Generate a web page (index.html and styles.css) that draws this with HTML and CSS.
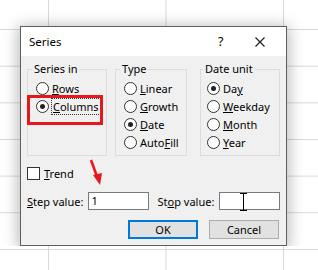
FILE: index.html
```html
<!DOCTYPE html>
<html>
<head>
<meta charset="utf-8">
<link rel="stylesheet" href="styles.css">
</head>
<body>
<div class="dialog">
  <div class="titlebar">
    <span class="title">Series</span>
    <span class="help">?</span>
    <span class="close"><svg width="10" height="10" viewBox="0 0 10 10"><path d="M0.5 0.5 L9.5 9.5 M9.5 0.5 L0.5 9.5" stroke="#1a1a1a" stroke-width="1.1" fill="none"/></svg></span>
  </div>
  <div class="content">
    <div class="groups">
      <fieldset class="group g-series">
        <legend>Series in</legend>
        <div class="opt"><span class="radio"></span><span class="lbl"><u>R</u>ows</span></div>
        <div class="opt"><span class="radio on"></span><span class="lbl focus"><u>C</u>olumns</span></div>
      </fieldset>
      <fieldset class="group g-type">
        <legend>Type</legend>
        <div class="opt"><span class="radio"></span><span class="lbl"><u>L</u>inear</span></div>
        <div class="opt"><span class="radio"></span><span class="lbl"><u>G</u>rowth</span></div>
        <div class="opt"><span class="radio on"></span><span class="lbl"><u>D</u>ate</span></div>
        <div class="opt"><span class="radio"></span><span class="lbl">Auto<u>F</u>ill</span></div>
      </fieldset>
      <fieldset class="group g-date">
        <legend>Date unit</legend>
        <div class="opt"><span class="radio on"></span><span class="lbl">Da<u>y</u></span></div>
        <div class="opt"><span class="radio"></span><span class="lbl"><u>W</u>eekday</span></div>
        <div class="opt"><span class="radio"></span><span class="lbl"><u>M</u>onth</span></div>
        <div class="opt"><span class="radio"></span><span class="lbl"><u>Y</u>ear</span></div>
      </fieldset>
    </div>
    <div class="trend"><span class="check"></span><span class="lbl"><u>T</u>rend</span></div>
    <div class="values">
      <span class="vlabel"><u>S</u>tep value:</span>
      <span class="input step">1</span>
      <span class="vlabel stop">St<u>o</u>p value:</span>
      <span class="input stopin"></span>
    </div>
    <div class="buttons">
      <span class="btn ok">OK</span>
      <span class="btn cancel">Cancel</span>
    </div>
  </div>
  <div class="highlight"></div>
  <svg class="arrow" width="16" height="28" viewBox="0 0 16 28"><path d="M2 1 L8.5 19" stroke="#e8171d" stroke-width="2.6" fill="none"/><path d="M4 16 L13 14 L11 26 Z" fill="#e8171d"/></svg>
  <svg class="ibeam" width="9" height="18" viewBox="0 0 9 18"><path d="M1 0.5 H8 M1 17.5 H8 M4.5 0.5 V17.5" stroke="#000" stroke-width="1" fill="none"/></svg>
</div>
</body>
</html>
```
FILE: styles.css
```css
html, body {
  margin: 0;
  padding: 0;
}
html {
  height: 270px;
  background-color: #ffffff;
  background-image:
    linear-gradient(to right, #d9d9d9 1px, transparent 1px),
    linear-gradient(to bottom, #d9d9d9 1px, transparent 1px);
  background-size: 117.5px 100%, 100% 36.67px;
  background-position: 48px 0, 0 29px;
}
body {
  font-family: "Noto Sans", "Open Sans", sans-serif;
  font-size: 11px;
  color: #000;
  padding-top: 26px;
  padding-left: 20px;
}
.dialog {
  position: relative;
  width: 265px;
  height: 218px;
  border: 1px solid #5f5f5f;
  background: #f0f0f0;
  box-shadow: 0 2px 14px 2px rgba(0, 0, 0, 0.28);
  box-sizing: content-box;
}
.titlebar {
  height: 29px;
  background: #ffffff;
  display: flex;
  align-items: center;
  padding-left: 8px;
  font-size: 11.5px;
}
.title {
  width: 189px;
}
.help {
  width: 24px;
  font-size: 12.5px;
}
.close {
  display: flex;
  margin-left: 13px;
}
.content {
  padding: 5px 6px 0 6px;
}
.groups {
  display: flex;
  height: 95px;
}
.group {
  margin: 0;
  border: 1px solid #dcdcdc;
  padding: 2px 0 0 8px;
  box-sizing: border-box;
  min-width: 0;
}
.group legend {
  padding: 0 2px;
  margin-left: -4px;
  line-height: 16px;
}
.g-series { width: 80px; }
.g-type { width: 72px; margin-left: 8px; }
.g-date { width: 80px; margin-left: 13px; padding-left: 6px; }
.opt {
  display: flex;
  align-items: center;
  height: 18px;
}
.radio {
  width: 11px;
  height: 11px;
  border: 1px solid #333;
  border-radius: 50%;
  background: #fff;
  box-sizing: content-box;
  display: flex;
  align-items: center;
  justify-content: center;
  flex: none;
}
.radio.on::after {
  content: "";
  width: 5px;
  height: 5px;
  border-radius: 50%;
  background: #222;
}
.lbl {
  margin-left: 3px;
  line-height: 15px;
}
.lbl.focus {
  outline: 1px dotted #333;
  outline-offset: 0;
  padding: 0 1px;
}
.trend {
  display: flex;
  align-items: center;
  height: 14px;
  margin-top: 10px;
}
.check {
  width: 11px;
  height: 11px;
  border: 1px solid #333;
  background: #fff;
  flex: none;
}
.trend .lbl { margin-left: 4px; }
.values {
  display: flex;
  align-items: center;
  margin-top: 12px;
  height: 18px;
}
.vlabel {
  width: 62px;
}
.vlabel.stop {
  margin-left: 9px;
  width: 63px;
}
.input {
  width: 56px;
  height: 16px;
  border: 1px solid #7a7a7a;
  background: #fff;
  padding-left: 3px;
  line-height: 16px;
  flex: none;
}
.input.stopin { width: 56px; }
.buttons {
  display: flex;
  justify-content: flex-end;
  margin-top: 10px;
  padding-right: 1px;
}
.btn {
  display: flex;
  align-items: center;
  justify-content: center;
  width: 68px;
  height: 17px;
  border: 1px solid #adadad;
  background: #e1e1e1;
}
.btn.ok {
  border: 2px solid #0078d7;
  width: 66px;
  height: 15px;
}
.btn.cancel {
  margin-left: 11px;
}
.highlight {
  position: absolute;
  left: 6px;
  top: 68px;
  width: 70px;
  height: 24px;
  border: 3px solid #e8171d;
}
.arrow {
  position: absolute;
  left: 68px;
  top: 132px;
}
.ibeam {
  position: absolute;
  left: 218px;
  top: 166px;
}
```
